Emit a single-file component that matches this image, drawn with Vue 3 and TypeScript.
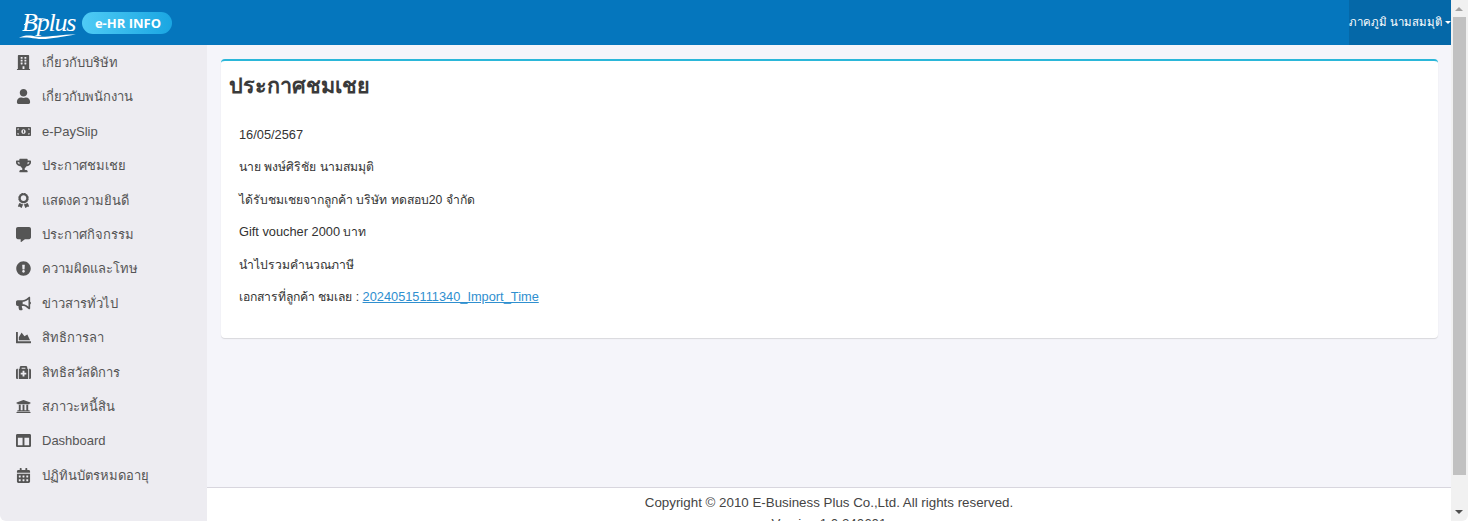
<script setup lang="ts">
type Item = { label: string; w: number; d: string }
const items: Item[] = [
  { label: 'เกี่ยวกับบริษัท', w: 448, d: 'M436 480h-20V24c0-13.300-10.700-24-24-24H56C42.700 0 32 10.700 32 24v456H12c-6.600 0-12 5.400-12 12v20h448v-20c0-6.600-5.400-12-12-12zM128 76c0-6.600 5.400-12 12-12h40c6.600 0 12 5.400 12 12v40c0 6.600-5.400 12-12 12h-40c-6.600 0-12-5.400-12-12V76zm0 96c0-6.600 5.400-12 12-12h40c6.600 0 12 5.400 12 12v40c0 6.600-5.400 12-12 12h-40c-6.600 0-12-5.400-12-12v-40zm52 148h-40c-6.600 0-12-5.400-12-12v-40c0-6.600 5.400-12 12-12h40c6.600 0 12 5.400 12 12v40c0 6.600-5.400 12-12 12zm76 160h-64v-84c0-6.600 5.400-12 12-12h40c6.600 0 12 5.400 12 12v84zm64-172c0 6.600-5.400 12-12 12h-40c-6.600 0-12-5.400-12-12v-40c0-6.600 5.400-12 12-12h40c6.600 0 12 5.400 12 12v40zm0-96c0 6.600-5.400 12-12 12h-40c-6.600 0-12-5.400-12-12v-40c0-6.600 5.400-12 12-12h40c6.600 0 12 5.400 12 12v40zm0-96c0 6.600-5.400 12-12 12h-40c-6.600 0-12-5.400-12-12V76c0-6.600 5.400-12 12-12h40c6.600 0 12 5.400 12 12v40z' },
  { label: 'เกี่ยวกับพนักงาน', w: 448, d: 'M224 256c70.700 0 128-57.300 128-128S294.700 0 224 0 96 57.300 96 128s57.300 128 128 128zm89.600 32h-16.700c-22.200 10.200-46.900 16-72.900 16s-50.600-5.800-72.900-16h-16.700C60.200 288 0 348.200 0 422.400V464c0 26.500 21.500 48 48 48h352c26.500 0 48-21.500 48-48v-41.600c0-74.200-60.200-134.400-134.400-134.400z' },
  { label: 'e-PaySlip', w: 640, d: 'M32 64h576c18 0 32 14 32 32v320c0 18-14 32-32 32H32c-18 0-32-14-32-32V96c0-18 14-32 32-32zm288 92c-54 0-92 46-92 100s38 100 92 100 92-46 92-100-38-100-92-100zM64 128v64c35 0 64-29 64-64H64zm512 256v-64c-35 0-64 29-64 64h64zM64 320v64h64c0-35-29-64-64-64zm512-128v-64h-64c0 35 29 64 64 64zM296 200h48v112h-48z' },
  { label: 'ประกาศชมเชย', w: 576, d: 'M552 64H448V24c0-13.300-10.700-24-24-24H152c-13.300 0-24 10.700-24 24v40H24C10.700 64 0 74.700 0 88v56c0 35.700 22.500 72.400 61.900 100.700 31.500 22.700 69.800 37.100 110 41.700C203.300 338.500 240 360 240 360v72h-48c-35.300 0-64 20.700-64 56v12c0 6.600 5.400 12 12 12h296c6.600 0 12-5.400 12-12v-12c0-35.300-28.700-56-64-56h-48v-72s36.700-21.500 68.100-73.600c40.300-4.600 78.600-19 110-41.700 39.300-28.300 61.900-65 61.900-100.700V88c0-13.300-10.700-24-24-24zM99.300 192.800C74.900 175.200 64 155.600 64 144v-16h64.200c1 32.600 5.800 61.200 12.800 86.200-15.100-5.200-29.200-12.400-41.700-21.400zM512 144c0 16.100-17.700 36.100-35.300 48.800-12.500 9-26.700 16.200-41.800 21.400 7-25 11.800-53.600 12.800-86.200H512v16z' },
  { label: 'แสดงความยินดี', w: 384, d: 'M97.120 362.630c-8.690-8.690-4.160-6.240-25.120-11.850-9.510-2.550-17.870-7.450-25.430-13.320L1.200 448.700c-4.390 10.770 3.810 22.470 15.430 22.030l52.690-2.010L105.560 507c8 8.440 22.040 5.810 26.430-4.960l52.050-127.620c-10.840 6.040-22.870 9.580-35.310 9.580-19.500 0-37.820-7.590-51.610-21.370zM382.800 448.700l-45.370-111.240c-7.560 5.880-15.920 10.770-25.430 13.320-21.070 5.640-16.450 3.180-25.120 11.850-13.790 13.780-32.120 21.370-51.620 21.370-12.440 0-24.470-3.550-35.310-9.580L252 502.040c4.390 10.770 18.440 13.400 26.430 4.960l36.250-38.280 52.690 2.010c11.620.440 19.820-11.270 15.430-22.030zM263 340c15.280-15.550 17.030-14.210 38.790-20.140 13.890-3.790 24.750-14.840 28.470-28.980 7.480-28.400 5.540-24.970 25.950-45.750 10.170-10.350 14.140-25.440 10.420-39.580-7.470-28.380-7.480-24.420 0-52.830 3.720-14.140-.25-29.230-10.420-39.580-20.410-20.780-18.470-17.360-25.950-45.750-3.720-14.140-14.580-25.190-28.470-28.980-27.880-7.610-24.520-5.620-44.950-26.410-10.170-10.350-25-14.400-38.890-10.610-27.870 7.600-23.980 7.610-51.900 0-13.890-3.790-28.720.25-38.890 10.610-20.410 20.780-17.050 18.800-44.940 26.410-13.890 3.790-24.750 14.840-28.470 28.980-7.470 28.390-5.540 24.970-25.950 45.750-10.170 10.350-14.150 25.440-10.420 39.580 7.470 28.360 7.480 24.400 0 52.820-3.720 14.140.25 29.230 10.420 39.590 20.410 20.780 18.470 17.350 25.950 45.750 3.720 14.140 14.580 25.190 28.470 28.980C104.600 325.960 106.270 325 121 340c13.230 13.470 33.840 15.880 49.740 5.820a39.676 39.676 0 0 1 42.530 0c15.890 10.060 36.500 7.650 49.730-5.820zM97.660 175.960c0-53.030 42.240-96.020 94.340-96.020s94.340 42.990 94.340 96.020-42.240 96.020-94.340 96.020-94.340-42.990-94.340-96.020z' },
  { label: 'ประกาศกิจกรรม', w: 512, d: 'M448 0H64C28.700 0 0 28.700 0 64v288c0 35.300 28.700 64 64 64h96v84c0 9.800 11.200 15.500 19.100 9.700L304 416h144c35.300 0 64-28.700 64-64V64c0-35.300-28.700-64-64-64z' },
  { label: 'ความผิดและโทษ', w: 512, d: 'M504 256c0 136.997-111.043 248-248 248S8 392.997 8 256C8 119.083 119.043 8 256 8s248 111.083 248 248zm-248 50c-25.405 0-46 20.595-46 46s20.595 46 46 46 46-20.595 46-46-20.595-46-46-46zm-43.673-165.346l7.418 136c.347 6.364 5.609 11.346 11.982 11.346h48.546c6.373 0 11.635-4.982 11.982-11.346l7.418-136c.375-6.874-5.098-12.654-11.982-12.654h-63.383c-6.884 0-12.356 5.780-11.981 12.654z' },
  { label: 'ข่าวสารทั่วไป', w: 576, d: 'M576 240c0-23.600-13-44-32-55.100V32c0-9-7-32-32-32-7 0-14 2.400-20 7.100l-85 68C364 109 310 128 256 128H64c-35.300 0-64 28.700-64 64v96c0 35.300 28.700 64 64 64h34c-1.500 10.500-2.400 21-2.400 32 0 39.800 9.300 77.400 25.600 111 5.200 10.700 16.500 17 28.400 17h74.300c26 0 41.600-29.800 25.800-50.500-16.400-21.500-26.100-48.300-26.100-77.500 0-11 1.600-21.700 4.400-32H256c54 0 108 19 151 53l85 68c5.800 4.600 13 7 20 7 25 0 32-22.500 32-32V295c19-11 32-31.400 32-55zm-96 141.400l-33-26.500C392 311 325 288 256 288v-96c69 0 136-23 191-67l33-26.500v282.900z' },
  { label: 'สิทธิการลา', w: 512, d: 'M500 384c6.600 0 12 5.400 12 12v40c0 6.600-5.400 12-12 12H12c-6.600 0-12-5.400-12-12V76c0-6.600 5.400-12 12-12h40c6.600 0 12 5.400 12 12v308h436zM372.700 159.500L288 216l-85.300-113.700c-5.100-6.800-15.500-6.300-19.900 1L96 248v104h384l-89.900-187.800c-3.200-6.500-11.400-8.700-17.400-4.700z' },
  { label: 'สิทธิสวัสดิการ', w: 512, d: 'M96 480h320V128h-32V80c0-26.500-21.500-48-48-48H176c-26.500 0-48 21.500-48 48v48H96v352zm96-384h128v32H192V96zm320 80v256c0 26.500-21.500 48-48 48h-16V128h16c26.500 0 48 21.500 48 48zM64 480H48c-26.500 0-48-21.500-48-48V176c0-26.500 21.500-48 48-48h16v352zm288-208v48c0 4.400-3.600 8-8 8h-56v56c0 4.400-3.600 8-8 8h-48c-4.400 0-8-3.600-8-8v-56h-56c-4.400 0-8-3.600-8-8v-48c0-4.400 3.600-8 8-8h56v-56c0-4.400 3.600-8 8-8h48c4.400 0 8 3.600 8 8v56h56c4.400 0 8 3.600 8 8z' },
  { label: 'สภาวะหนี้สิน', w: 512, d: 'M496 128v16a8 8 0 0 1-8 8h-24v12c0 6.600-5.400 12-12 12H60c-6.600 0-12-5.400-12-12v-12H24a8 8 0 0 1-8-8v-16a8 8 0 0 1 4.900-7.400l232-88a8 8 0 0 1 6.200 0l232 88A8 8 0 0 1 496 128zm-24 304H40c-13.300 0-24 10.700-24 24v16a8 8 0 0 0 8 8h464a8 8 0 0 0 8-8v-16c0-13.300-10.700-24-24-24zM96 192v192H60c-6.600 0-12 5.400-12 12v20h416v-20c0-6.600-5.400-12-12-12h-36V192h-64v192h-64V192h-64v192h-64V192H96z' },
  { label: 'Dashboard', w: 512, d: 'M464 32H48C21.490 32 0 53.490 0 80v352c0 26.510 21.490 48 48 48h416c26.510 0 48-21.490 48-48V80c0-26.510-21.490-48-48-48zM224 416H64V160h160v256zm224 0H288V160h160v256z' },
  { label: 'ปฏิทินบัตรหมดอายุ', w: 448, d: 'M0 464c0 26.500 21.500 48 48 48h352c26.500 0 48-21.500 48-48V192H0v272zm320-196c0-6.600 5.400-12 12-12h40c6.600 0 12 5.400 12 12v40c0 6.600-5.400 12-12 12h-40c-6.600 0-12-5.400-12-12v-40zm0 128c0-6.600 5.400-12 12-12h40c6.600 0 12 5.400 12 12v40c0 6.600-5.400 12-12 12h-40c-6.600 0-12-5.400-12-12v-40zM192 268c0-6.600 5.400-12 12-12h40c6.600 0 12 5.400 12 12v40c0 6.600-5.400 12-12 12h-40c-6.600 0-12-5.400-12-12v-40zm0 128c0-6.600 5.400-12 12-12h40c6.600 0 12 5.400 12 12v40c0 6.600-5.400 12-12 12h-40c-6.600 0-12-5.400-12-12v-40zM64 268c0-6.600 5.400-12 12-12h40c6.600 0 12 5.400 12 12v40c0 6.600-5.400 12-12 12H76c-6.600 0-12-5.400-12-12v-40zm0 128c0-6.600 5.400-12 12-12h40c6.600 0 12 5.400 12 12v40c0 6.600-5.400 12-12 12H76c-6.600 0-12-5.400-12-12v-40zM400 64h-48V16c0-8.800-7.200-16-16-16h-32c-8.800 0-16 7.200-16 16v48H160V16c0-8.800-7.200-16-16-16h-32c-8.800 0-16 7.200-16 16v48H48C21.500 64 0 85.500 0 112v48h448v-48c0-26.500-21.500-48-48-48z' }
]
</script>

<template>
  <div class="page">
    <div class="app">
      <header class="top">
        <div class="brand">
          <span class="logo">
            <span class="script">Bplus</span>
            <svg class="swoosh" viewBox="0 0 60 30" width="60" height="30"><path d="M1 22C8 18 14 20 18 20.500C28 22 40 18.500 58 18.500C42 20.500 28 24.500 18 22.500C12 22 7 21 1 22Z" fill="#fff" /><path d="M6 9C12 3 22 1 30 4" stroke="#fff" stroke-width="1" fill="none" /></svg>
          </span>
          <span class="pill">e-HR INFO</span>
        </div>
        <div class="user">ภาคภูมิ นามสมมุติ<span class="caret"></span></div>
      </header>
      <div class="body">
        <aside class="side">
          <a v-for="it in items" :key="it.label" class="row">
            <span class="ico"><svg :viewBox="`0 ${(it.w > 512 ? (512 - it.w) / 2 : 0)} ${it.w} ${Math.max(it.w, 512)}`" width="15" height="15"><path :d="it.d" fill="currentColor" fill-rule="evenodd" /></svg></span>
            <span>{{ it.label }}</span>
          </a>
        </aside>
        <div class="main">
          <div class="content">
            <section class="card">
              <h2>ประกาศชมเชย</h2>
              <div class="msg">
                <p class="lat">16/05/2567</p>
                <p>นาย พงษ์ศิริชัย นามสมมุติ</p>
                <p>ได้รับชมเชยจากลูกค้า บริษัท ทดสอบ20 จำกัด</p>
                <p><span class="lat">Gift voucher 2000</span> บาท</p>
                <p>นำไปรวมคำนวณภาษี</p>
                <p>เอกสารที่ลูกค้า ชมเลย : <a class="link lat">20240515111340_Import_Time</a></p>
              </div>
            </section>
          </div>
          <footer class="foot">
            <div>Copyright © 2010 E-Business Plus Co.,Ltd. All rights reserved.</div>
            <div>Version 1.0.240601</div>
          </footer>
        </div>
      </div>
    </div>
    <div class="bar">
      <span class="arrow up"></span>
      <span class="thumb"></span>
      <span class="arrow down"></span>
    </div>
  </div>
</template>

<style>
html, body { margin: 0; overflow: hidden; background: #fff; }
</style>

<style scoped>
.page { display: flex; height: 521px; overflow: hidden; font-family: "Liberation Sans", "Noto Sans", sans-serif; color: #333; border-radius: 0 0 6px 6px; }
.app { flex: 1; min-width: 0; display: flex; flex-direction: column; }
.top { height: 45px; flex: none; background: #0576bd; display: flex; justify-content: space-between; }
.brand { display: flex; align-items: center; padding-left: 18px; gap: 7px; }
.logo { position: relative; width: 57px; height: 30px; display: block; }
.script { font: italic 26px/30px "Liberation Serif", serif; color: #fff; letter-spacing: -1.200px; display: block; padding-left: 4px; }
.swoosh { position: absolute; left: 0; top: 8px; }
.pill { width: 90px; height: 22px; border-radius: 11px; background: linear-gradient(90deg, #4fcbf5, #1aa6e2); color: #fff; font: 700 13px/22px "Open Sans", sans-serif; text-align: center; padding-left: 2px; box-sizing: border-box; }
.user { background: #0568a8; width: 102px; color: #fff; font-size: 11.400px; line-height: 47px; white-space: nowrap; display: flex; align-items: center; }
.caret { border: 3px solid transparent; border-top-color: #fff; border-bottom: 0; margin-left: 3px; }
.body { flex: 1; display: flex; min-height: 0; }
.side { width: 207px; flex: none; background: #edecf1; color: #555; font-size: 13px; padding-top: 0.300px; }
.row { display: flex; align-items: center; height: 34.400px; }
.ico { width: 42px; flex: none; display: flex; justify-content: center; padding-left: 5px; box-sizing: border-box; }
.ico svg { display: block; }
.main { flex: 1; min-width: 0; display: flex; flex-direction: column; background: #f5f5fa; }
.content { height: 442px; flex: none; box-sizing: border-box; padding: 14px 13px 0 14px; }
.card { height: 279px; box-sizing: border-box; background: #fff; border-top: 2px solid #2bb7d9; border-radius: 4px; box-shadow: 0 1px 1px rgba(0,0,0,.12); padding: 12px 8px 0; }
h2 { margin: 0; font-size: 21.600px; line-height: 26px; font-weight: 700; color: #3a3a3a; }
.msg { padding: 27px 10px 0; font-size: 12.200px; }
.msg p { margin: 0 0 14.400px; line-height: 18px; }
.msg .lat { font-size: 12.800px; }
.link { color: #2f8fcf; text-decoration: underline; }
.foot { flex: 1; background: #fff; border-top: 1px solid #d8d6de; text-align: center; font-size: 13.330px; line-height: 21px; padding-top: 4px; color: #444; }
.bar { width: 17px; flex: none; background: #f1f1f1; display: flex; flex-direction: column; align-items: center; }
.thumb { width: 13px; height: 458px; flex: none; background: #c1c1c1; }
.arrow { width: 15px; position: relative; flex: none; }
.arrow::after { content: ""; position: absolute; left: 3px; border-left: 4px solid transparent; border-right: 4px solid transparent; }
.up { height: 17px; }
.up::after { top: 7px; border-bottom: 4px solid #a3a3a3; }
.down { height: 29px; }
.down::after { top: 35px; border-top: 4px solid #505050; }
</style>
